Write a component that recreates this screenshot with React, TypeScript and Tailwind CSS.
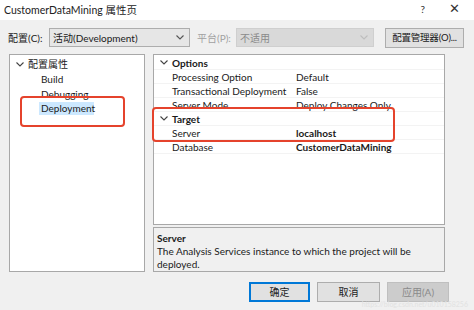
import React from 'react'

const FONT = 'font-["Lato","Noto_Sans_CJK_SC",sans-serif]'

function Chevron({ className = '' }: { className?: string }) {
  return (
    <svg width="8" height="5" viewBox="0 0 8 5" className={className}>
      <path d="M0.5 0.5 L4 4 L7.5 0.5" fill="none" stroke="currentColor" strokeWidth="1.1" />
    </svg>
  )
}

interface Row {
  name: string
  value?: string
  header?: boolean
  bold?: boolean
}

const ROWS: Row[] = [
  { name: 'Options', header: true },
  { name: 'Processing Option', value: 'Default' },
  { name: 'Transactional Deployment', value: 'False' },
  { name: 'Server Mode', value: 'Deploy Changes Only' },
  { name: 'Target', header: true },
  { name: 'Server', value: 'localhost', bold: true },
  { name: 'Database', value: 'CustomerDataMining', bold: true },
]

export default function App() {
  return (
    <div className={`relative w-[474px] h-[310px] bg-[#f0f0f0] flex flex-col overflow-hidden text-[10px] leading-none text-[#1a1a1a] ${FONT}`}>
      {/* title bar */}
      <div className="h-[20px] bg-white flex items-center pl-[4px] pr-[14px] shrink-0">
        <span className="text-[10.5px] text-[#222]">CustomerDataMining 属性页</span>
        <span className="ml-auto text-[10px] text-[#333] -mt-[3px]">?</span>
        <span className="ml-[24px] text-[13px] text-[#333] font-light -mt-[3px]">✕</span>
      </div>

      {/* config row */}
      <div className="flex items-center mt-[8px] h-[19px] pl-[8px] shrink-0">
        <span className="w-[41px]">配置(C):</span>
        <div className="w-[141px] h-[19px] bg-[#e6e6e6] border border-[#adadad] flex items-center pl-[3px] pr-[5px]">
          <span>活动(Development)</span>
          <Chevron className="ml-auto text-[#555]" />
        </div>
        <span className="ml-[7px] w-[39px] text-[#a0a0a0]">平台(P):</span>
        <div className="w-[138px] h-[19px] bg-[#d9d9d9] border border-[#cfcfcf] flex items-center pl-[3px] pr-[5px] text-[#8a8a8a]">
          <span>不适用</span>
          <Chevron className="ml-auto text-[#bdbdbd]" />
        </div>
        <div className="ml-[11px] w-[79px] h-[20px] bg-[#e1e1e1] border border-[#adadad] flex items-center justify-center text-[9.5px] tracking-[-0.2px]">
          配置管理器(O)...
        </div>
      </div>

      {/* main area */}
      <div className="flex mt-[7px] pl-[9px] h-[218px] shrink-0">
        <div className="w-[136px] h-full bg-white border border-[#a8a8a8] pt-[2px]">
          <div className="h-[14px] flex items-center pl-[6px]">
            <Chevron className="text-[#444]" />
            <span className="ml-[4px]">配置属性</span>
          </div>
          <div className="h-[15px] flex items-center pl-[31px]">Build</div>
          <div className="h-[15px] flex items-center pl-[31px]">Debugging</div>
          <div className="h-[14px] flex items-center pl-[29px]">
            <span className="bg-[#cce8ff] h-[13px] flex items-center px-[2px] w-[55px]">Deployment</span>
          </div>
        </div>

        <div className="ml-[8px] w-[292px] flex flex-col">
          <div className="h-[173px] bg-white border border-[#a8a8a8] pt-[1px]">
            {ROWS.map((r) => (
              <div key={r.name} className="h-[14px] flex items-center border-b border-[#f3f3f3]">
                <div className="w-[17px] flex justify-center pl-[3px]">
                  {r.header && <Chevron className="text-[#444]" />}
                </div>
                <span className={`w-[125px] pl-[1px] whitespace-nowrap ${r.header ? 'font-bold' : ''}`}>{r.name}</span>
                {r.value && <span className={r.bold ? 'font-bold' : ''}>{r.value}</span>}
              </div>
            ))}
          </div>
          <div className="mt-[2px] flex-1 bg-[#f0f0f0] border border-[#a8a8a8] pl-[3px] pt-[4px] leading-[13px]">
            <div className="font-bold">Server</div>
            <div>The Analysis Services instance to which the project will be</div>
            <div>deployed.</div>
          </div>
        </div>
      </div>

      {/* buttons */}
      <div className="flex mt-[10px] pl-[249px] gap-[7px] shrink-0">
        <div className="w-[61px] h-[20px] bg-[#e1e1e1] border-2 border-[#0078d7] flex items-center justify-center">确定</div>
        <div className="w-[63px] h-[20px] bg-[#e1e1e1] border border-[#adadad] flex items-center justify-center">取消</div>
        <div className="w-[62px] h-[20px] bg-[#cccccc] border border-[#bfbfbf] flex items-center justify-center text-[#8a8a8a]">应用(A)</div>
      </div>

      <span className="absolute right-[6px] bottom-[2px] text-[7px] text-[#e2e2e2]">https://blog.csdn.net/u010158256</span>

      {/* annotation boxes */}
      <div className="absolute left-[20px] top-[96px] w-[105px] h-[31px] border-2 border-[#e5432c] rounded-[4px]" />
      <div className="absolute left-[152px] top-[107px] w-[243px] h-[35px] border-2 border-[#e5432c] rounded-[4px]" />
    </div>
  )
}
